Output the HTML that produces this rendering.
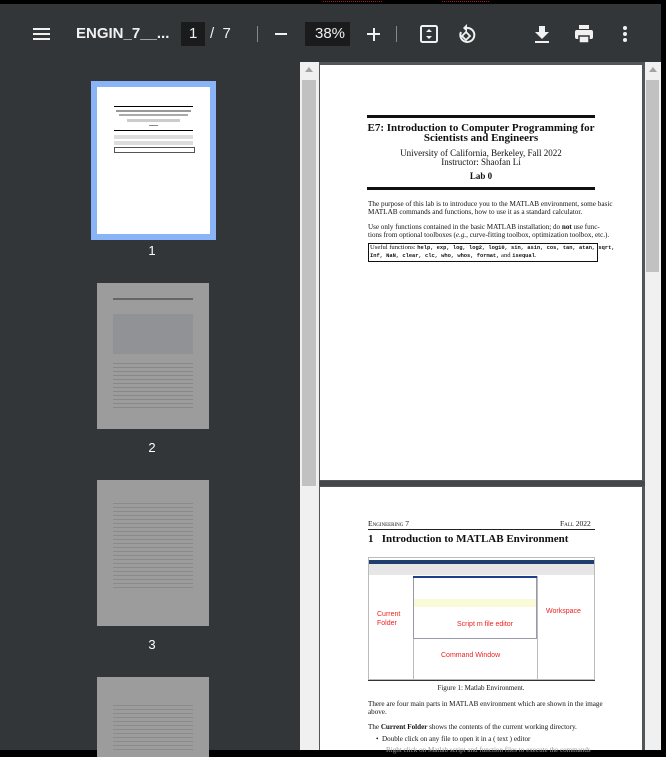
<!DOCTYPE html>
<html><head><meta charset="utf-8"><style>
*{margin:0;padding:0;box-sizing:border-box}
body{width:666px;height:750px;overflow:hidden;background:#000;position:relative;font-family:"Liberation Sans",sans-serif}
.a{position:absolute}
.tb{left:0;top:4px;width:661px;height:58px;background:#323639;color:#f1f1f1}
.side{left:0;top:62px;width:300px;height:688px;background:#323639}
.serif{font-family:"Liberation Serif",serif;color:#111}
.mono{font-family:"Liberation Mono",monospace;font-weight:bold;font-size:5.4px}
.pg{background:#fff}
.t{position:absolute;white-space:nowrap}
.num{color:#fff;font-size:13px;text-align:center;width:30px}
</style></head><body>
<div class="a" style="left:0;top:0;width:666px;height:4px;background:#000"></div>
<div class="a" style="left:323px;top:1px;width:59px;height:1px;border-top:1px dotted #a02020"></div>
<div class="a" style="left:442px;top:1px;width:47px;height:1px;border-top:1px dotted #a02020"></div>
<div class="a tb">
 <div class="a" style="left:33px;top:24px;width:17px;height:2px;background:#f1f1f1;box-shadow:0 5px 0 #f1f1f1,0 10px 0 #f1f1f1"></div>
 <div class="t" style="left:76px;top:21px;font-size:15px;font-weight:bold">ENGIN_7__...</div>
 <div class="a" style="left:181px;top:18px;width:24px;height:24px;background:#191b1c"></div>
 <div class="t" style="left:189px;top:21px;font-size:15px">1</div>
 <div class="t" style="left:210px;top:21px;font-size:15px">/ &nbsp;7</div>
 <div class="a" style="left:257px;top:22px;width:1px;height:16px;background:#888"></div>
 <div class="a" style="left:275px;top:29px;width:12px;height:2px;background:#f1f1f1"></div>
 <div class="a" style="left:305px;top:18px;width:45px;height:24px;background:#191b1c"></div>
 <div class="t" style="left:315px;top:21px;font-size:15px">38%</div>
 <div class="a" style="left:367px;top:29px;width:13px;height:2px;background:#f1f1f1"></div>
 <div class="a" style="left:372.5px;top:23.5px;width:2px;height:13px;background:#f1f1f1"></div>
 <div class="a" style="left:396px;top:22px;width:1px;height:16px;background:#888"></div>
 <svg class="a" style="left:418px;top:19px" width="22" height="22" viewBox="0 0 22 22"><rect x="3" y="3" width="16" height="16" rx="1.5" fill="none" stroke="#f1f1f1" stroke-width="2"/><path d="M11 6l-3 3h6zM11 16l-3-3h6z" fill="#f1f1f1"/></svg>
 <svg class="a" style="left:455px;top:18px" width="24" height="24" viewBox="0 0 24 24"><path d="M12 6a7 7 0 1 1-6 4" fill="none" stroke="#f1f1f1" stroke-width="2"/><path d="M12 2v8l-4-4z" fill="#f1f1f1"/><path d="M11 10l4 4-4 4-4-4z" fill="none" stroke="#f1f1f1" stroke-width="1.8"/></svg>
 <svg class="a" style="left:532px;top:19px" width="20" height="22" viewBox="0 0 20 22"><path d="M7 3h6v6h4l-7 7-7-7h4z" fill="#f1f1f1"/><rect x="3" y="18" width="14" height="2" fill="#f1f1f1"/></svg>
 <svg class="a" style="left:573px;top:19px" width="22" height="22" viewBox="0 0 22 22"><rect x="6" y="2" width="10" height="4" fill="#f1f1f1"/><rect x="2" y="7" width="18" height="9" rx="2" fill="#f1f1f1"/><rect x="6" y="13" width="10" height="7" fill="#f1f1f1" stroke="#323639" stroke-width="1.5"/></svg>
 <div class="a" style="left:623px;top:22px;width:4px;height:4px;border-radius:2px;background:#f1f1f1;box-shadow:0 6px 0 #f1f1f1,0 12px 0 #f1f1f1"></div>
</div>
<div class="a side">
 <div class="a" style="left:91px;top:19px;width:125px;height:159px;background:#8ab4f8"></div>
 <div class="a" style="left:97px;top:25px;width:113px;height:147px;background:#fff">
  <div class="a" style="left:17px;top:19px;width:79px;height:1px;background:#000"></div>
  <div class="a" style="left:19px;top:23px;width:75px;height:2px;background:#999"></div>
  <div class="a" style="left:22px;top:27px;width:69px;height:2px;background:#aaa"></div>
  <div class="a" style="left:30px;top:32px;width:53px;height:3px;background:#ccc"></div>
  <div class="a" style="left:52px;top:38px;width:9px;height:1px;background:#888"></div>
  <div class="a" style="left:17px;top:43px;width:79px;height:1px;background:#000"></div>
  <div class="a" style="left:17px;top:48px;width:79px;height:4px;background:#ddd"></div>
  <div class="a" style="left:17px;top:54px;width:79px;height:4px;background:#ddd"></div>
  <div class="a" style="left:17px;top:60px;width:81px;height:6px;border:1px solid #555"></div>
 </div>
 <div class="a num" style="left:137px;top:181px">1</div>
 <div class="a" style="left:97px;top:221px;width:112px;height:146px;background:#9c9c9c"></div>
 <div class="a" style="left:113px;top:236px;width:80px;height:2px;background:#666"></div>
 <div class="a" style="left:113px;top:252px;width:80px;height:40px;background:#909296"></div>
 <div class="a" style="left:113px;top:298px;width:80px;height:50px;background:repeating-linear-gradient(#9c9c9c 0 3px,#888 3px 4px)"></div>
 <div class="a num" style="left:137px;top:378px">2</div>
 <div class="a" style="left:97px;top:418px;width:112px;height:146px;background:#9c9c9c"></div>
 <div class="a" style="left:113px;top:438px;width:80px;height:90px;background:repeating-linear-gradient(#9c9c9c 0 3px,#8a8a8a 3px 4px)"></div>
 <div class="a num" style="left:137px;top:575px">3</div>
 <div class="a" style="left:97px;top:615px;width:112px;height:80px;background:#9c9c9c"></div>
 <div class="a" style="left:113px;top:640px;width:80px;height:50px;background:repeating-linear-gradient(#9c9c9c 0 3px,#8a8a8a 3px 4px)"></div>
</div>
<div class="a" style="left:300px;top:62px;width:19px;height:688px;background:#f0f0f0"></div>
<div class="a" style="left:302px;top:80px;width:14px;height:406px;background:#c1c1c1"></div>
<div class="a" style="left:305px;top:67px;width:0;height:0;border:4px solid transparent;border-bottom:5px solid #a3a3a3;border-top:0"></div>
<div class="a" style="left:319px;top:62px;width:326px;height:688px;background:#525659"></div>
<div class="a pg" style="left:320px;top:65px;width:322px;height:415px">
 <div class="a" style="left:47px;top:50px;width:228px;height:3px;background:#111"></div>
 <div class="t serif" style="left:0;width:322px;text-align:center;top:58px;font-size:11px;font-weight:bold;line-height:10px">E7: Introduction to Computer Programming for<br>Scientists and Engineers</div>
 <div class="t serif" style="left:0;width:322px;text-align:center;top:84px;font-size:9px;line-height:9px">University of California, Berkeley, Fall 2022<br>Instructor: Shaofan Li</div>
 <div class="t serif" style="left:0;width:322px;text-align:center;top:106px;font-size:9px;font-weight:bold">Lab 0</div>
 <div class="a" style="left:47px;top:122px;width:228px;height:3px;background:#111"></div>
 <div class="t serif" style="left:48px;top:135px;font-size:7.2px;line-height:8px">The purpose of this lab is to introduce you to the MATLAB environment, some basic<br>MATLAB commands and functions, how to use it as a standard calculator.</div>
 <div class="t serif" style="left:48px;top:158px;font-size:7.1px;line-height:8px">Use only functions contained in the basic MATLAB installation; do <b>not</b> use func-<br>tions from optional toolboxes (<i>e.g.</i>, curve-fitting toolbox, optimization toolbox, etc.).</div>
 <div class="a" style="left:48px;top:178px;width:230px;height:19px;border:1px solid #111"></div>
 <div class="t serif" style="left:50px;top:179px;font-size:6.6px;line-height:8px">Useful functions: <span class="mono">help, exp, log, log2, log10, sin, asin, cos, tan, atan, sqrt,</span><br><span class="mono">Inf, NaN, clear, clc, who, whos, format,</span> and <span class="mono">isequal</span>.</div>
</div>
<div class="a" style="left:319px;top:481px;width:326px;height:5px;background:#45484b"></div>
<div class="a pg" style="left:320px;top:487px;width:322px;height:263px">
 <div class="t serif" style="left:48px;top:32px;font-size:7.5px;font-variant:small-caps">Engineering 7</div>
 <div class="t serif" style="left:240px;top:32px;font-size:7.5px;font-variant:small-caps">Fall 2022</div>
 <div class="a" style="left:48px;top:42px;width:227px;height:1px;background:#222"></div>
 <div class="t serif" style="left:48px;top:46px;font-size:11px;font-weight:bold">1&nbsp;&nbsp;&nbsp;Introduction to MATLAB Environment</div>
 <div class="a" style="left:48px;top:70px;width:227px;height:123px;background:#fff;border:1px solid #bbb">
  <div class="a" style="left:0;top:2px;width:225px;height:4px;background:#1e3e6e"></div>
  <div class="a" style="left:0;top:6px;width:225px;height:11px;background:#e6e6e6"></div>
  <div class="a" style="left:44px;top:18px;width:124px;height:63px;border:1px solid #99a;background:linear-gradient(#fff 0 22px,#fafad8 22px 30px,#fff 30px)"></div>
  <div class="a" style="left:44px;top:18px;width:124px;height:2px;background:#1e3e8e"></div>
  <div class="a" style="left:44px;top:81px;width:1px;height:40px;background:#bbb"></div>
  <div class="a" style="left:168px;top:18px;width:1px;height:103px;background:#bbb"></div>
  <div class="t" style="left:8px;top:52px;font-size:7px;color:#e22;line-height:9px">Current<br>Folder</div>
  <div class="t" style="left:88px;top:63px;font-size:7px;color:#e22">Script m file editor</div>
  <div class="t" style="left:177px;top:50px;font-size:7px;color:#e22">Workspace</div>
  <div class="t" style="left:72px;top:94px;font-size:7px;color:#e22">Command Window</div>
 </div>
 <div class="a" style="left:48px;top:193px;width:227px;height:1px;background:#333"></div>
 <div class="t serif" style="left:0;width:322px;text-align:center;top:197px;font-size:7px">Figure 1: Matlab Environment.</div>
 <div class="t serif" style="left:48px;top:213px;font-size:7.1px;line-height:8px">There are four main parts in MATLAB environment which are shown in the image<br>above.</div>
 <div class="t serif" style="left:48px;top:236px;font-size:7.1px">The <b>Current Folder</b> shows the contents of the current working directory.</div>
 <div class="t serif" style="left:56px;top:248px;font-size:7.1px">• &nbsp;Double click on any file to open it in a ( text ) editor</div>
 <div class="t serif" style="left:66px;top:259px;font-size:7.1px;color:#999">Right click on Matlab script and function files to execute the commands</div>
</div>
<div class="a" style="left:645px;top:62px;width:16px;height:688px;background:#f0f0f0"></div>
<div class="a" style="left:646px;top:80px;width:13px;height:192px;background:#c1c1c1"></div>
<div class="a" style="left:649px;top:67px;width:0;height:0;border:4px solid transparent;border-bottom:5px solid #a3a3a3;border-top:0"></div>
<div class="a" style="left:661px;top:0;width:5px;height:750px;background:#000"></div>
</body></html>
